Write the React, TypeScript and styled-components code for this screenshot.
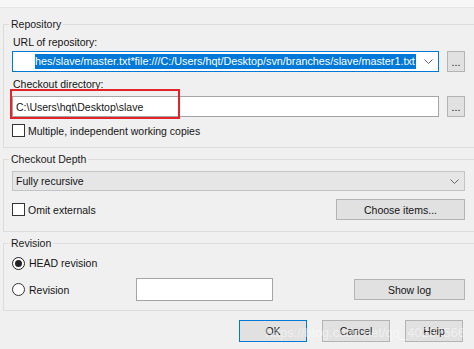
import React from "react";
import styled, { createGlobalStyle } from "styled-components";

const GlobalStyle = createGlobalStyle`
  html, body { margin: 0; padding: 0; }
  body {
    width: 474px;
    height: 349px;
    overflow: hidden;
    background: #f0f0f0;
    font-family: "Liberation Sans", Arial, sans-serif;
    font-size: 10.5px;
    color: #141414;
  }
`;

const Dialog = styled.div`
  position: relative;
  width: 474px;
  height: 349px;
  overflow: hidden;
  display: flex;
  flex-direction: column;
`;

const TopStrip = styled.div`
  height: 7px;
  flex: none;
  background: #f7f7f7;
  border-bottom: 1px solid #e6e6e6;
`;

const Group = styled.fieldset<{ $top: number; $bottom: number }>`
  margin: ${(p) => p.$top}px -3px 0 3px;
  padding: 0 11px ${(p) => p.$bottom}px 8px;
  border: 1px solid #dcdcdc;
  min-width: 0;
  display: flex;
  flex-direction: column;
`;

const Legend = styled.legend`
  margin-left: -3px;
  padding: 0 2px;
  line-height: 15px;
  font-size: 10.5px;
  color: #1a1a1a;
`;

const Label = styled.div<{ $mt: number }>`
  margin-top: ${(p) => p.$mt}px;
  line-height: 14px;
  padding-left: 1px;
`;

const Row = styled.div<{ $mt: number; $h: number }>`
  position: relative;
  margin-top: ${(p) => p.$mt}px;
  height: ${(p) => p.$h}px;
  display: flex;
  align-items: center;
  gap: 8px;
`;

const UrlCombo = styled.div`
  flex: 1;
  height: 21px;
  box-sizing: border-box;
  border: 1px solid #0078d7;
  background: #fff;
  display: flex;
  align-items: center;
  padding: 0 5px 0 22px;
  gap: 6px;
  min-width: 0;
`;

const SelectionClip = styled.div`
  flex: 1;
  min-width: 0;
  overflow: hidden;
  display: flex;
  justify-content: flex-start;
`;

const Selected = styled.span`
  flex: none;
  white-space: nowrap;
  background: #0078d7;
  color: #fff;
  line-height: 15px;
  font-size: 10.8px;
  padding-right: 1px;
`;

const TextBox = styled.div<{ $w?: number; $h: number }>`
  ${(p) => (p.$w ? `width: ${p.$w}px; flex: none;` : "flex: 1;")}
  height: ${(p) => p.$h}px;
  box-sizing: border-box;
  border: 1px solid #a5a5a5;
  background: #fff;
  display: flex;
  align-items: center;
  padding-left: 3px;
  white-space: nowrap;
`;

const DepthCombo = styled.div`
  flex: 1;
  height: 20px;
  box-sizing: border-box;
  border: 1px solid #c4c4c4;
  background: #e6e6e6;
  display: flex;
  align-items: center;
  justify-content: space-between;
  padding: 0 5px 0 3px;
`;

const Button = styled.button<{ $w: number; $h?: number; $default?: boolean }>`
  width: ${(p) => p.$w}px;
  height: ${(p) => p.$h ?? 21}px;
  flex: none;
  box-sizing: border-box;
  margin: 0;
  padding: 0;
  background: #e1e1e1;
  border: 1px solid ${(p) => (p.$default ? "#0078d7" : "#b4b4b4")};
  font-family: inherit;
  font-size: 10.5px;
  color: #141414;
  display: flex;
  align-items: center;
  justify-content: center;
`;

const Spacer = styled.div`
  flex: 1;
`;

const Check = styled.label`
  display: flex;
  align-items: center;
  gap: 3px;
  line-height: 14px;
`;

const Box = styled.span`
  width: 13px;
  height: 13px;
  box-sizing: border-box;
  border: 1px solid #333;
  background: #fff;
  flex: none;
`;

const Radio = styled.span<{ $on?: boolean }>`
  width: 13px;
  height: 13px;
  box-sizing: border-box;
  border-radius: 50%;
  border: ${(p) => (p.$on ? "1.5px solid #222" : "1px solid #333")};
  background: #fff;
  flex: none;
  display: flex;
  align-items: center;
  justify-content: center;
  &::after {
    content: "";
    display: ${(p) => (p.$on ? "block" : "none")};
    width: 7px;
    height: 7px;
    border-radius: 50%;
    background: #222;
  }
`;

const RadioLabel = styled(Check)<{ $w?: number }>`
  width: ${(p) => (p.$w ? `${p.$w}px` : "auto")};
  gap: 4px;
  flex: none;
`;

const RedMark = styled.div`
  position: absolute;
  left: -2px;
  top: -7px;
  width: 170px;
  height: 30px;
  box-sizing: border-box;
  border: 2px solid #e3242b;
  pointer-events: none;
`;

const Footer = styled.div`
  margin-top: 9px;
  padding-right: 11px;
  display: flex;
  justify-content: flex-end;
  gap: 15px;
`;

const Watermark = styled.div`
  position: absolute;
  right: 9px;
  bottom: 9px;
  font-size: 13px;
  color: rgba(255, 255, 255, 0.5);
  white-space: nowrap;
  pointer-events: none;
`;

const Chevron = () => (
  <svg width="9" height="5" viewBox="0 0 9 5" style={{ flex: "none" }}>
    <polyline points="0.5,0.5 4.5,4.5 8.5,0.5" fill="none" stroke="#666" strokeWidth="1" />
  </svg>
);

export default function App() {
  return (
    <>
      <GlobalStyle />
      <Dialog>
        <TopStrip />
        <Group $top={9} $bottom={10}>
          <Legend>Repository</Legend>
          <Label $mt={3}>URL of repository:</Label>
          <Row $mt={2} $h={21}>
            <UrlCombo>
              <SelectionClip>
                <Selected>hes/slave/master.txt*file:///C:/Users/hqt/Desktop/svn/branches/slave/master1.txt</Selected>
              </SelectionClip>
              <Chevron />
            </UrlCombo>
            <Button $w={18}>...</Button>
          </Row>
          <Label $mt={5}>Checkout directory:</Label>
          <Row $mt={5} $h={21}>
            <TextBox $h={21}>C:\Users\hqt\Desktop\slave</TextBox>
            <Button $w={18}>...</Button>
            <RedMark />
          </Row>
          <Row $mt={7} $h={13}>
            <Check>
              <Box />
              Multiple, independent working copies
            </Check>
          </Row>
        </Group>

        <Group $top={4} $bottom={11}>
          <Legend>Checkout Depth</Legend>
          <Row $mt={4} $h={20}>
            <DepthCombo>
              Fully recursive
              <Chevron />
            </DepthCombo>
          </Row>
          <Row $mt={8} $h={21}>
            <Check>
              <Box />
              Omit externals
            </Check>
            <Spacer />
            <Button $w={129}>Choose items...</Button>
          </Row>
        </Group>

        <Group $top={4} $bottom={9}>
          <Legend>Revision</Legend>
          <Row $mt={5} $h={14}>
            <RadioLabel>
              <Radio $on />
              HEAD revision
            </RadioLabel>
          </Row>
          <Row $mt={8} $h={23}>
            <RadioLabel $w={116}>
              <Radio />
              Revision
            </RadioLabel>
            <TextBox $w={137} $h={23} />
            <Spacer />
            <Button $w={111}>Show log</Button>
          </Row>
        </Group>

        <Footer>
          <Button $w={68} $h={22} $default>OK</Button>
          <Button $w={68} $h={22}>Cancel</Button>
          <Button $w={58} $h={22}>Help</Button>
        </Footer>
        <Watermark>https://blog.csdn.net/qq_40287566</Watermark>
      </Dialog>
    </>
  );
}
